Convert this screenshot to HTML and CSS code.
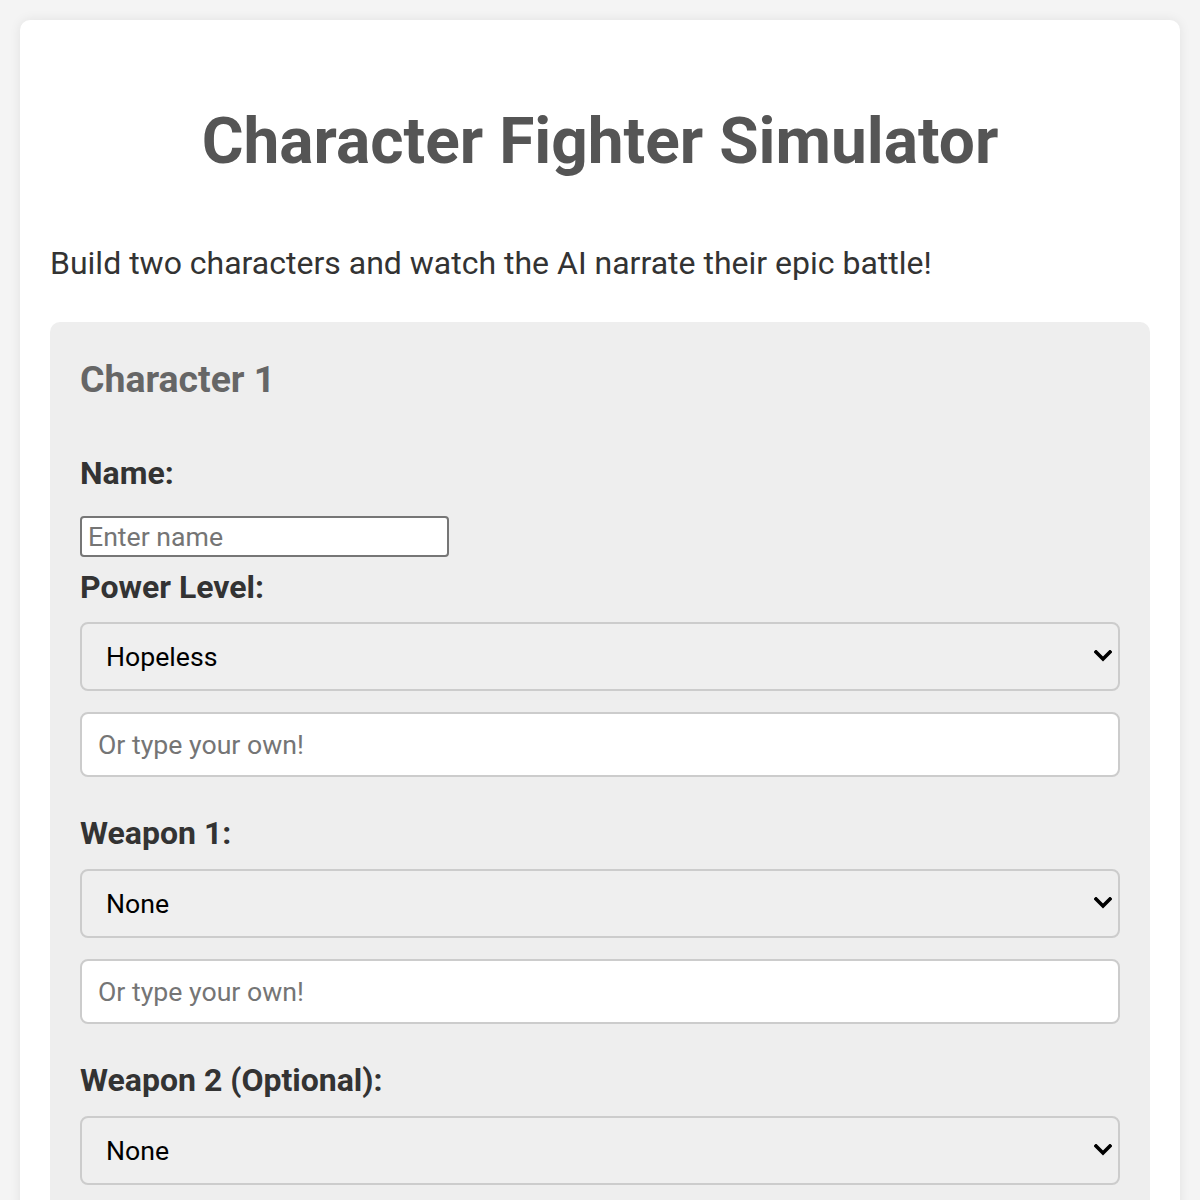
FILE: index.html
```html
<!DOCTYPE html>
<html lang="en">
<head>
<meta charset="utf-8">
<title>Character Fighter Simulator</title>
<link rel="stylesheet" href="styles.css">
</head>
<body>
<div class="container">
  <h1 class="title">Character Fighter Simulator</h1>
  <p class="intro">Build two characters and watch the AI narrate their epic battle!</p>
  <section class="character">
    <h2 class="char-title">Character 1</h2>
    <label class="field-label label-first" for="name1">Name:</label>
    <input class="name-input" id="name1" type="text" placeholder="Enter name">
    <label class="field-label label-tight" for="power1">Power Level:</label>
    <div class="select-wrap">
      <select class="choice" id="power1"><option>Hopeless</option></select>
      <svg class="chev" viewBox="0 0 18 12" width="18" height="12"><path d="M2 2 L9 9 L16 2" fill="none" stroke="#000" stroke-width="3.6" stroke-linecap="square"/></svg>
    </div>
    <input class="own-input" type="text" placeholder="Or type your own!">
    <label class="field-label" for="weapon1">Weapon 1:</label>
    <div class="select-wrap">
      <select class="choice" id="weapon1"><option>None</option></select>
      <svg class="chev" viewBox="0 0 18 12" width="18" height="12"><path d="M2 2 L9 9 L16 2" fill="none" stroke="#000" stroke-width="3.6" stroke-linecap="square"/></svg>
    </div>
    <input class="own-input" type="text" placeholder="Or type your own!">
    <label class="field-label" for="weapon2">Weapon 2 (Optional):</label>
    <div class="select-wrap">
      <select class="choice" id="weapon2"><option>None</option></select>
      <svg class="chev" viewBox="0 0 18 12" width="18" height="12"><path d="M2 2 L9 9 L16 2" fill="none" stroke="#000" stroke-width="3.6" stroke-linecap="square"/></svg>
    </div>
    <input class="own-input" type="text" placeholder="Or type your own!">
  </section>
</div>
</body>
</html>
```

FILE: styles.css
```css
html, body {
  margin: 0;
  padding: 0;
}
body {
  background: #f4f4f4;
  font-family: Roboto, "Liberation Sans", Arial, sans-serif;
  color: #333;
  padding: 20px;
}
.container {
  background: #fff;
  border-radius: 10px;
  padding: 30px;
  box-shadow: 0 0 12px rgba(0, 0, 0, 0.08);
}
.title {
  font-size: 64px;
  line-height: 76px;
  font-weight: 700;
  color: #555;
  text-align: center;
  margin: 54px 0 0;
}
.intro {
  font-size: 32px;
  line-height: 38px;
  margin: 64px 0 0;
  color: #333;
}
.character {
  background: #eee;
  border-radius: 10px;
  padding: 30px;
  margin-top: 40px;
}
.char-title {
  font-size: 37.4px;
  line-height: 42px;
  color: #666;
  margin: 6px 0 0;
  font-weight: 700;
}
.field-label {
  display: block;
  font-size: 32px;
  line-height: 38px;
  font-weight: 700;
  color: #333;
  margin: 37px 0 17px;
}
.label-first {
  margin-top: 54px;
  margin-bottom: 24px;
}
.label-tight {
  margin-top: 11px;
  margin-bottom: 16px;
}
.name-input {
  display: block;
  box-sizing: border-box;
  width: 369px;
  height: 41px;
  border: 2px solid #767676;
  border-radius: 4px;
  background: #fff;
  font-family: Roboto, "Liberation Sans", Arial, sans-serif;
  font-size: 26.67px;
  padding: 0 6px;
  margin: 0;
  color: #000;
}
.name-input::placeholder {
  color: #757575;
}
.select-wrap {
  position: relative;
}
.choice {
  display: block;
  width: 100%;
  box-sizing: border-box;
  height: 69px;
  appearance: none;
  -webkit-appearance: none;
  background: #efefef;
  border: 2px solid #ccc;
  border-radius: 8px;
  font-family: Roboto, "Liberation Sans", Arial, sans-serif;
  font-size: 26.67px;
  color: #000;
  padding: 0 0 0 24px;
  margin: 0;
}
.chev {
  position: absolute;
  right: 8px;
  top: 28px;
  pointer-events: none;
}
.own-input {
  display: block;
  box-sizing: border-box;
  width: 100%;
  height: 65px;
  margin: 21px 0 0;
  background: #fff;
  border: 2px solid #ccc;
  border-radius: 8px;
  font-family: Roboto, "Liberation Sans", Arial, sans-serif;
  font-size: 26.67px;
  padding: 0 16px;
  color: #000;
}
.own-input::placeholder {
  color: #757575;
}
```
